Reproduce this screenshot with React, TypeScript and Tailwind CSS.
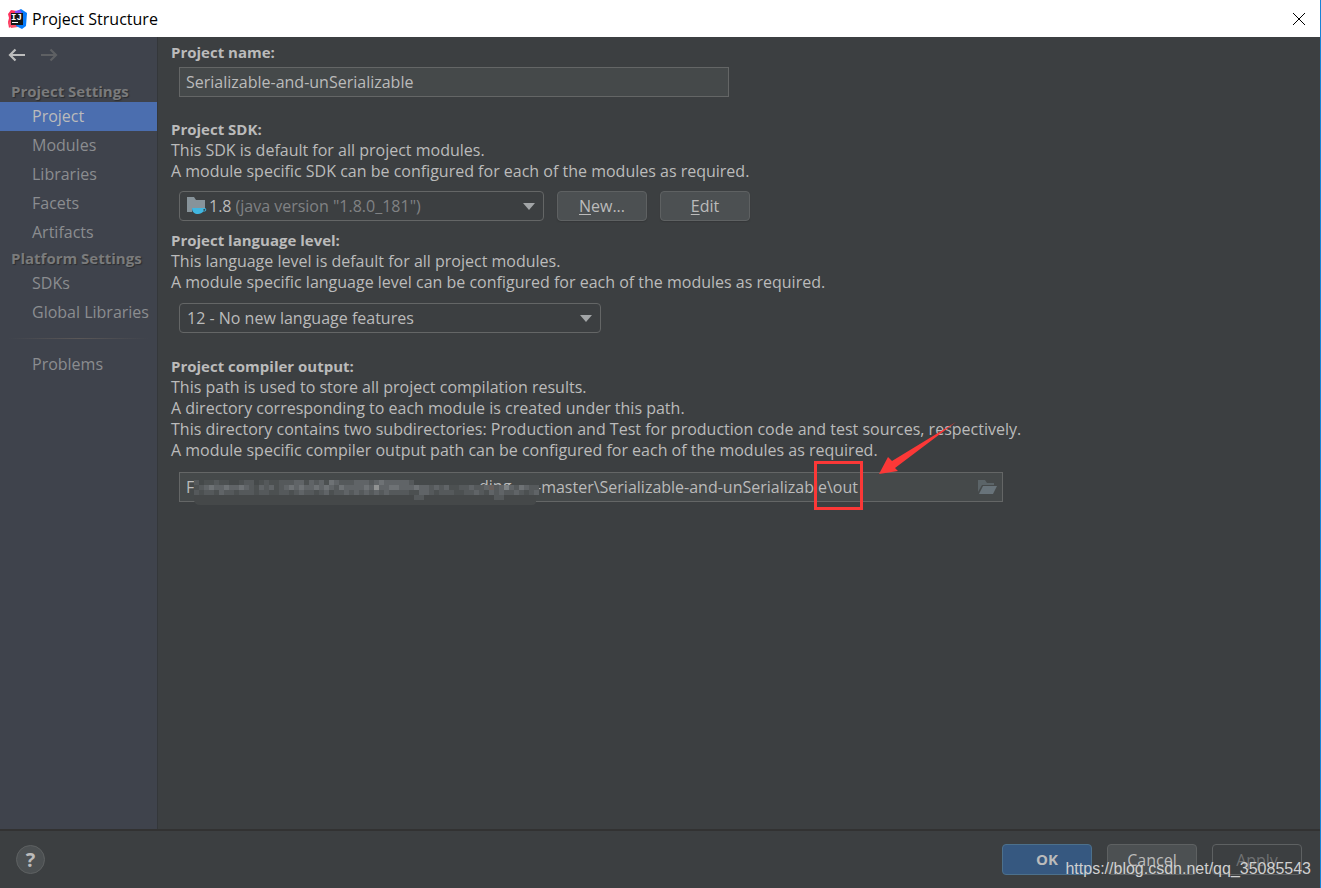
import type { ReactNode } from "react";

const PROJECT_ITEMS = ["Project", "Modules", "Libraries", "Facets", "Artifacts"];
const PLATFORM_ITEMS = ["SDKs", "Global Libraries"];

// one character per 5px cell of the censored part of the path
const MOSAIC = [
  "b.aabaa..abb.abaabbbccacbcadcbbbcccbcdcccccb.........................",
  "abcdccdccdcbacbcabcdcdccdcdcbdccccdchccddcccdccbcbcaabbcbbcfbcecbdcbb",
  "babbacbbabbbabbaabbabcbbabcabbcbcbcbcbcbbbbaaccbabbbaabbcbacbcbbcbabc",
  "............................................bb..............bb.......",
];

const MOSAIC_COLORS: Record<string, string> = {
  a: "#4c5051",
  b: "#55595b",
  c: "#606467",
  d: "#6e7275",
  e: "#7e8385",
  f: "#685f5b",
  g: "#566470",
  h: "#909292",
};

function AppLogo() {
  return (
    <svg width="20" height="20" viewBox="0 0 20 20" aria-hidden="true">
      <path d="M1 5 4 1l6 1 1 9-9 8-1-6 1-4z" fill="#fe315d" />
      <path d="M1 14 7 9l4 9-7 1z" fill="#f9506a" />
      <path d="M10 2 14 0l6 4-1 13-4 3-6-3z" fill="#087cfa" />
      <path d="M8 2 13 1l2 3-7 1z" fill="#8a4af7" />
      <rect x="4" y="4" width="12" height="12" fill="#17181a" />
      <text x="4" y="11" fontSize="9" fontWeight="700" fontFamily="Liberation Mono, monospace" fill="#fff">
        IJ
      </text>
      <rect x="5" y="13" width="6" height="1" fill="#fff" />
    </svg>
  );
}

function NavArrow({ className }: { className: string }) {
  return (
    <svg width="17" height="14" viewBox="0 0 17 14" fill="none" stroke="currentColor" strokeWidth="2.200" className={className} aria-hidden="true">
      <path d="M17 7H2M7.500 1.500 2 7l5.500 5.500" />
    </svg>
  );
}

function SdkIcon() {
  return (
    <svg width="20" height="18" viewBox="0 0 20 18" className="shrink-0" aria-hidden="true">
      <path d="M0 0h7l2 3h9v8H5v4H0z" fill="#87939a" />
      <path d="M5 11h12.500a1.800 1.800 0 0 1 0 3.600h-1.200C15 16.300 13.500 17 11 17c-3.500 0-6-2-6-6zm11.500 1v1.700h1a.8.8 0 0 0 0-1.700z" fill="#40b6e0" />
    </svg>
  );
}

function ChevronTriangle() {
  return (
    <svg width="12" height="7" viewBox="0 0 12 7" className="pointer-events-none shrink-0" aria-hidden="true">
      <path d="M0 0h12L6 7z" fill="#a2a5a7" />
    </svg>
  );
}

function FolderIcon() {
  return (
    <svg width="19" height="15" viewBox="0 0 19 15" aria-hidden="true">
      <path d="M0 12V0h7l2 3h7v2H4z" fill="#5b6468" />
      <path d="M5 6h14l-4 8H1z" fill="#68737a" />
    </svg>
  );
}

function SideItem({ label, active = false }: { label: string; active?: boolean }) {
  return (
    <li>
      <a
        href="#"
        className={
          active
            ? "block h-[29px] bg-[#4b6eaf] pl-8 leading-[29px] text-[#bbbbbb]"
            : "block h-[29px] pl-8 leading-[29px] text-[#8b8d90]"
        }
      >
        {label}
      </a>
    </li>
  );
}

function SideHeading({ children }: { children: ReactNode }) {
  return (
    <h2 className="pl-[11px] text-[15px] font-bold leading-[22px] text-[#7a7b7c] [text-shadow:1px_1px_1px_#2b2d30]">
      {children}
    </h2>
  );
}

function Sidebar() {
  return (
    <nav className="w-[158px] shrink-0 whitespace-nowrap border-r border-[#34373a] bg-[#3f434c]">
      <div className="flex gap-4 pb-[18px] pl-2 pt-[11px]">
        <button type="button" aria-label="Back" className="text-[#bdbdbd]">
          <NavArrow className="block" />
        </button>
        <button type="button" aria-label="Forward" disabled className="text-[#5e6063]">
          <NavArrow className="block rotate-180" />
        </button>
      </div>
      <SideHeading>Project Settings</SideHeading>
      <ul>
        {PROJECT_ITEMS.map((label) => (
          <SideItem key={label} label={label} active={label === "Project"} />
        ))}
      </ul>
      <SideHeading>Platform Settings</SideHeading>
      <ul>
        {PLATFORM_ITEMS.map((label) => (
          <SideItem key={label} label={label} />
        ))}
      </ul>
      <div className="mx-2 my-[11px] h-px bg-linear-to-r from-transparent via-[#5a5757] to-transparent" />
      <ul>
        <SideItem label="Problems" />
      </ul>
    </nav>
  );
}

function CensoredPath() {
  return (
    <span className="relative h-full w-[342px] shrink-0">
      <span className="block pl-[285px] leading-[26px]">ding</span>
      <svg width="345" height="26" viewBox="0 0 345 26" className="absolute left-0 top-[7px]" aria-hidden="true">
        <path d="M0 6h342v15q0 4-4 4H6q-6 0-6-6z" fill="#454849" />
        {MOSAIC.map((row, y) =>
          row.split("").map((cell, x) =>
            cell === "." ? null : (
              <rect key={`${x}-${y}`} x={x * 5} y={y * 5} width="5" height="5" fill={MOSAIC_COLORS[cell]} />
            ),
          ),
        )}
      </svg>
    </span>
  );
}

function RedMarks() {
  return (
    <>
      <div className="pointer-events-none absolute -top-3 left-[634px] h-[49px] w-[49px] border-3 border-[#fb3837]" />
      <svg width="78" height="53" viewBox="0 0 78 53" className="pointer-events-none absolute -top-[51px] left-[699px]" aria-hidden="true">
        <path d="M0 52 9 35l4 4L77 0 16 46l3 3z" fill="#fb3837" />
      </svg>
    </>
  );
}

function DialogButton({ children }: { children: ReactNode }) {
  return (
    <button type="button" className="h-[30px] w-[90px] rounded border border-[#5e6162] bg-[#4c5052] shadow-[0_1px_1px_#353739]">
      {children}
    </button>
  );
}

function ProjectForm() {
  return (
    <form className="min-w-0 flex-1 pl-[13px] pr-4 pt-[5px] leading-[21px]">
      <label htmlFor="project-name" className="block text-[15px] font-bold">
        Project name:
      </label>
      <input
        id="project-name"
        type="text"
        defaultValue="Serializable-and-unSerializable"
        className="ml-2 mt-1 block h-[30px] w-[550px] border border-[#646666] bg-[#45494a] px-[6px] outline-none"
      />

      <label htmlFor="project-sdk" className="mt-[22px] block text-[15px] font-bold">
        Project SDK:
      </label>
      <p>This SDK is default for all project modules.</p>
      <p>A module specific SDK can be configured for each of the modules as required.</p>
      <div className="ml-2 mt-[9px] flex gap-[13px]">
        <div className="flex h-[30px] w-[365px] items-center rounded border border-[#646666] pl-[7px] pr-2">
          <SdkIcon />
          <span className="ml-[2px] mr-1">1.8</span>
          <select id="project-sdk" className="min-w-0 flex-1 appearance-none bg-transparent text-[#808284] outline-none">
            <option>(java version &quot;1.8.0_181&quot;)</option>
          </select>
          <ChevronTriangle />
        </div>
        <DialogButton>
          <span className="underline underline-offset-2">N</span>ew...
        </DialogButton>
        <DialogButton>
          <span className="underline underline-offset-2">E</span>dit
        </DialogButton>
      </div>

      <label htmlFor="language-level" className="mt-[9px] block text-[15px] font-bold">
        Project language level:
      </label>
      <p>This language level is default for all project modules.</p>
      <p>A module specific language level can be configured for each of the modules as required.</p>
      <div className="ml-2 mt-[10px] flex h-[30px] w-[422px] items-center rounded border border-[#646666] pl-[7px] pr-2">
        <select id="language-level" className="min-w-0 flex-1 appearance-none bg-transparent outline-none">
          <option>12 - No new language features</option>
        </select>
        <ChevronTriangle />
      </div>

      <label htmlFor="compiler-output" className="mt-[23px] block text-[15px] font-bold">
        Project compiler output:
      </label>
      <p>This path is used to store all project compilation results.</p>
      <p>A directory corresponding to each module is created under this path.</p>
      <p>This directory contains two subdirectories: Production and Test for production code and test sources, respectively.</p>
      <p>A module specific compiler output path can be configured for each of the modules as required.</p>
      <div className="relative ml-2 mt-[11px] flex h-[30px] max-w-[824px] items-center border border-[#646666] bg-[#45494a] pl-[6px] pr-[5px]">
        <span className="w-2 shrink-0">F</span>
        <CensoredPath />
        <input
          id="compiler-output"
          type="text"
          defaultValue="-master\Serializable-and-unSerializable\out"
          className="min-w-0 flex-1 bg-transparent outline-none"
        />
        <button type="button" aria-label="Browse">
          <FolderIcon />
        </button>
        <RedMarks />
      </div>
    </form>
  );
}

export default function App() {
  return (
    <div className="relative flex min-h-screen flex-col border-r border-[#1883d7] bg-[#3c3f41] font-['Open_Sans',sans-serif] text-[16px] text-[#bbbbbb]">
      <header className="flex h-[37px] items-center bg-white pl-[7px] pr-[14px] text-black">
        <AppLogo />
        <h1 className="ml-[5px] flex-1">Project Structure</h1>
        <button type="button" aria-label="Close">
          <svg width="14" height="14" viewBox="0 0 14 14" stroke="currentColor" className="block" aria-hidden="true">
            <path d="m1 1 12 12M13 1 1 13" />
          </svg>
        </button>
      </header>

      <div className="flex flex-1">
        <Sidebar />
        <ProjectForm />
      </div>

      <footer className="flex items-center gap-[15px] border-t-2 border-[#323232] py-[13px] pl-4 pr-[18px]">
        <button
          type="button"
          aria-label="Help"
          className="mr-auto flex h-[29px] w-[29px] items-center justify-center rounded-full border border-[#5e6162] bg-[#4c5052] text-[20px] font-bold"
        >
          ?
        </button>
        <button type="button" className="h-[31px] w-[90px] rounded border border-[#4c708c] bg-[#365880] text-[15px] font-bold">
          OK
        </button>
        <button type="button" className="h-[31px] w-[90px] rounded border border-[#5e6162] bg-[#4c5052]">
          Cancel
        </button>
        <button type="button" disabled className="h-[31px] w-[90px] rounded border border-[#5e6162] text-[#6f7173]">
          Apply
        </button>
      </footer>

      <p className="pointer-events-none absolute bottom-[7px] right-[9px] font-['Liberation_Sans',sans-serif] text-[16px] text-[#d0d0d0]">
        https://blog.csdn.net/qq_35085543
      </p>
    </div>
  );
}
